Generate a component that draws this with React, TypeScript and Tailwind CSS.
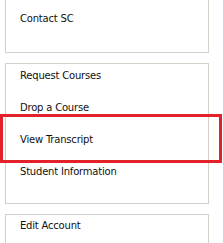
import React from 'react';

export default function App() {
  const middle = ['Request Courses', 'Drop a Course', 'View Transcript', 'Student Information'];

  return (
    <div className="relative w-[223px] h-[243px] overflow-hidden bg-white text-[#111] text-[10px] leading-[14px] tracking-[-0.2px] font-['DejaVu_Sans',sans-serif]">
      <div className="pl-[5px]">
        <div className="w-[204px] -mt-[1px] border border-[#d4d0c8] pl-[14px] pt-[12px] pb-[26px]">
          <div>Contact SC</div>
        </div>

        <div className="w-[204px] mt-[10px] border border-[#d4d0c8] pb-[11px]">
          {middle.map((item) => (
            <div key={item} className="h-[32px] pl-[14px] pt-[5px]">
              {item}
            </div>
          ))}
        </div>

        <div className="w-[204px] mt-[10px] border border-[#d4d0c8] pl-[14px] pt-[4px] pb-[20px]">
          <div>Edit Account</div>
        </div>
      </div>

      <div className="absolute left-0 top-[114px] w-[222px] h-[49px] border-[3px] border-[#e4202a]" />
    </div>
  );
}
